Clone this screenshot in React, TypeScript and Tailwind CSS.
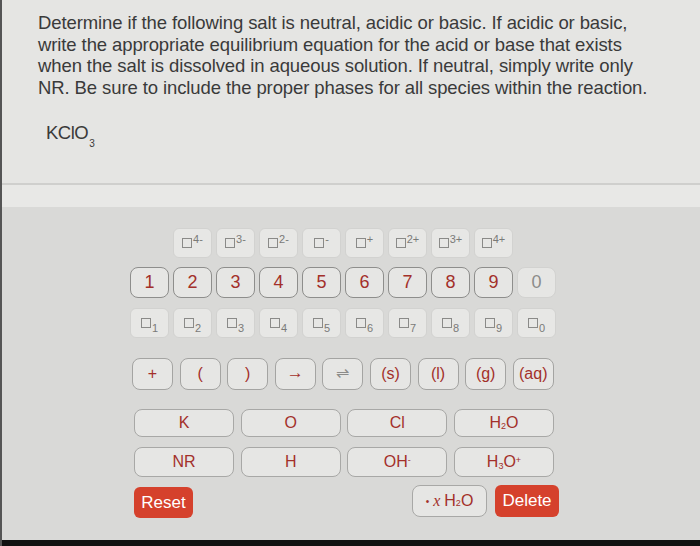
import React from "react";

const F = { fontFamily: '"Liberation Sans", Arial, sans-serif' };

function Sq({ size = 10 }: { size?: number }) {
  return (
    <span
      className="inline-block border border-[#8a8a88]"
      style={{ width: size, height: size }}
    />
  );
}

function ChargeBtn({ label }: { label: string }) {
  return (
    <div className="w-[39px] h-[30px] rounded-md bg-[#e7e7e5] border border-[#d2d2d0] flex items-center justify-center text-[#7a7a78]">
      <Sq />
      <span className="text-[11px] leading-none -mt-[8px] ml-[1px]">{label}</span>
    </div>
  );
}

function SubBtn({ label }: { label: string }) {
  return (
    <div className="w-[39px] h-[30px] rounded-md bg-[#e7e7e5] border border-[#d2d2d0] flex items-center justify-center text-[#7a7a78]">
      <Sq />
      <span className="text-[11px] leading-none mt-[10px] ml-[1px]">{label}</span>
    </div>
  );
}

function NumBtn({ label, disabled }: { label: string; disabled?: boolean }) {
  return (
    <div
      className={
        "w-[39px] h-[31px] rounded-lg flex items-center justify-center text-[18px] bg-[#e6e6e4] " +
        (disabled
          ? "border border-[#d2d2d0] text-[#8c8c8a]"
          : "border border-[#8e8e8c] text-[#a3302a]")
      }
    >
      {label}
    </div>
  );
}

function OpBtn({ children }: { children: React.ReactNode }) {
  return (
    <div className="w-[41px] h-[32px] rounded-lg border border-[#a4a4a2] bg-[#e6e6e4] flex items-center justify-center text-[16px] text-[#a3302a]">
      {children}
    </div>
  );
}

function ElBtn({ children, h = 28 }: { children: React.ReactNode; h?: number }) {
  return (
    <div
      className="w-[100px] rounded-lg border border-[#a8a8a6] bg-[#e6e6e4] flex items-center justify-center text-[16px] text-[#a3302a]"
      style={{ height: h }}
    >
      {children}
    </div>
  );
}

export default function App() {
  const charges = ["4-", "3-", "2-", "-", "+", "2+", "3+", "4+"];
  const nums = ["1", "2", "3", "4", "5", "6", "7", "8", "9"];
  const subs = ["1", "2", "3", "4", "5", "6", "7", "8", "9", "0"];
  return (
    <div
      className="w-[700px] h-[546px] overflow-hidden flex flex-col bg-[#e5e5e3] border-l-2 border-[#555]"
      style={F}
    >
      {/* Question */}
      <div className="h-[183px] pl-[36px] pt-[12px] text-[#3a3a3a]">
        <p className="text-[18.5px] leading-[21.7px] tracking-[-0.1px] w-[660px] whitespace-nowrap">
          Determine if the following salt is neutral, acidic or basic. If acidic or basic,
          <br />
          write the appropriate equilibrium equation for the acid or base that exists
          <br />
          when the salt is dissolved in aqueous solution. If neutral, simply write only
          <br />
          NR. Be sure to include the proper phases for all species within the reaction.
        </p>
        <div className="mt-[20px] ml-[8px] text-[18.5px] tracking-[-0.5px] flex items-end">
          <span>KClO</span>
          <span className="text-[10px] ml-[1px] -mb-[4px]">3</span>
        </div>
      </div>
      <div className="h-[2px] bg-[#cfcfcd]" />
      <div className="h-[22px] bg-[#e8e8e6]" />
      {/* Keypad panel */}
      <div className="flex-1 bg-[#d9d9d7] flex flex-col pl-[128px]">
        <div className="flex gap-[4px] ml-[43px] mt-[21px]">
          {charges.map((c) => (
            <ChargeBtn key={c} label={c} />
          ))}
        </div>
        <div className="flex gap-[4px] mt-[9px]">
          {nums.map((n) => (
            <NumBtn key={n} label={n} />
          ))}
          <NumBtn label="0" disabled />
        </div>
        <div className="flex gap-[4px] mt-[10px]">
          {subs.map((s) => (
            <SubBtn key={s} label={s} />
          ))}
        </div>
        <div className="flex gap-[6.6px] ml-[2px] mt-[20px]">
          <OpBtn>+</OpBtn>
          <OpBtn>(</OpBtn>
          <OpBtn>)</OpBtn>
          <OpBtn>
            <span className="text-[17px] leading-none -mt-[4px]">→</span>
          </OpBtn>
          <OpBtn>
            <span className="text-[16px] leading-none -mt-[2px] text-[#8c8c8a]">⇌</span>
          </OpBtn>
          <OpBtn>(s)</OpBtn>
          <OpBtn>(l)</OpBtn>
          <OpBtn>(g)</OpBtn>
          <OpBtn>(aq)</OpBtn>
        </div>
        <div className="flex gap-[6.67px] ml-[4px] mt-[19px]">
          <ElBtn>K</ElBtn>
          <ElBtn>O</ElBtn>
          <ElBtn>Cl</ElBtn>
          <ElBtn>
            H<span className="text-[9px] self-end mb-[3px]">2</span>O
          </ElBtn>
        </div>
        <div className="flex gap-[6.67px] ml-[4px] mt-[10px]">
          <ElBtn h={30}>NR</ElBtn>
          <ElBtn h={30}>H</ElBtn>
          <ElBtn h={30}>
            OH<span className="text-[9px] self-start mt-[6px]">-</span>
          </ElBtn>
          <ElBtn h={30}>
            H<span className="text-[9px] self-end mb-[3px]">3</span>O
            <span className="text-[9px] self-start mt-[6px]">+</span>
          </ElBtn>
        </div>
        <div className="flex items-start mt-[8px] ml-[4px] w-[425px]">
          <div className="w-[59px] h-[31px] mt-[2px] rounded-md bg-[#d5412c] text-white text-[17px] flex items-center justify-center">
            Reset
          </div>
          <div className="flex-1" />
          <div className="w-[75px] h-[32px] rounded-lg border border-[#a8a8a6] bg-[#e6e6e4] flex items-center justify-center text-[16px] text-[#a3302a]">
            <span className="text-[10px] mr-[4px]">•</span>
            <span className="italic" style={{ fontFamily: '"Liberation Serif", serif' }}>x</span>
            <span className="ml-[4px]">H</span>
            <span className="text-[9px] self-end mb-[6px]">2</span>
            <span>O</span>
          </div>
          <div className="w-[64px] h-[32px] ml-[8px] rounded-md bg-[#d5412c] text-white text-[17px] flex items-center justify-center">
            Delete
          </div>
        </div>
      </div>
      <div className="h-[6px] bg-[#111]" />
    </div>
  );
}
